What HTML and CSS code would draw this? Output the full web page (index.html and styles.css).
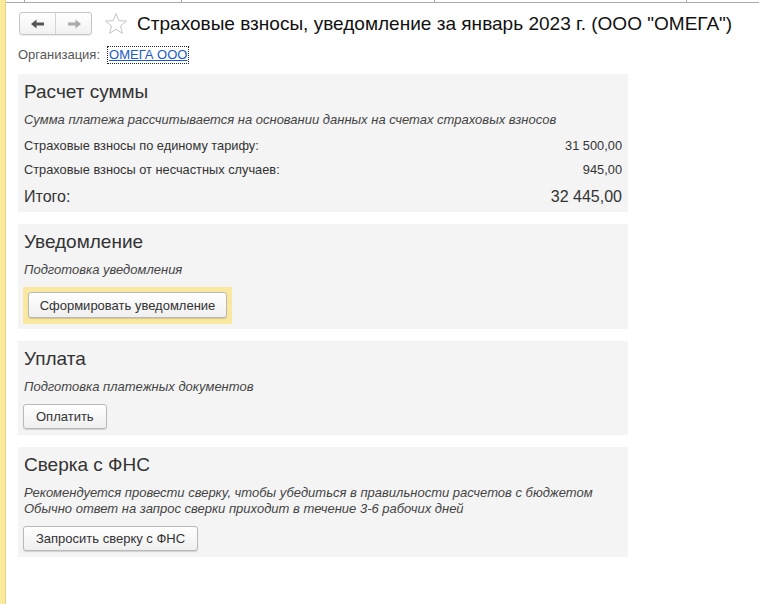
FILE: index.html
```html
<!DOCTYPE html>
<html lang="ru">
<head>
<meta charset="utf-8">
<title>Страховые взносы</title>
<link rel="stylesheet" href="styles.css">
</head>
<body>
<div class="side"></div>
<div class="page">
  <div class="tabs">
    <span class="tab t1"></span><span class="tab t2"></span><span class="tab t3"></span><span class="tab t4"></span><span class="tab t5"></span>
  </div>
  <div class="content">
    <div class="header">
      <div class="nav">
        <span class="navbtn">
          <svg width="16" height="12" viewBox="0 0 16 12"><path d="M1 6 L6.5 1.5 L6.5 4.5 L14 4.5 L14 7.5 L6.5 7.5 L6.5 10.5 Z" fill="#555"/></svg>
        </span>
        <span class="navbtn">
          <svg width="16" height="12" viewBox="0 0 16 12"><path d="M15 6 L9.5 1.5 L9.5 4.5 L2 4.5 L2 7.5 L9.5 7.5 L9.5 10.5 Z" fill="#aaa"/></svg>
        </span>
      </div>
      <svg class="star" width="24" height="24" viewBox="0 0 24 24"><path d="M12 1.5 L14.8 8.6 L22.4 9.1 L16.5 13.9 L18.4 21.3 L12 17.2 L5.6 21.3 L7.5 13.9 L1.6 9.1 L9.2 8.6 Z" fill="none" stroke="#c4c4c4" stroke-width="1"/></svg>
      <h1 class="title">Страховые взносы, уведомление за январь 2023 г. (ООО "ОМЕГА")</h1>
    </div>
    <div class="org"><span class="org-label">Организация:</span><a class="org-link" href="#">ОМЕГА ООО</a></div>

    <section class="card first">
      <h2>Расчет суммы</h2>
      <p class="note">Сумма платежа рассчитывается на основании данных на счетах страховых взносов</p>
      <div class="row"><span>Страховые взносы по единому тарифу:</span><span>31 500,00</span></div>
      <div class="row"><span>Страховые взносы от несчастных случаев:</span><span>945,00</span></div>
      <div class="row total"><span>Итого:</span><span>32 445,00</span></div>
    </section>

    <section class="card">
      <h2>Уведомление</h2>
      <p class="note">Подготовка уведомления</p>
      <div class="hl"><button class="btn wide">Сформировать уведомление</button></div>
    </section>

    <section class="card">
      <h2>Уплата</h2>
      <p class="note">Подготовка платежных документов</p>
      <button class="btn">Оплатить</button>
    </section>

    <section class="card">
      <h2>Сверка с ФНС</h2>
      <p class="note">Рекомендуется провести сверку, чтобы убедиться в правильности расчетов с бюджетом<br>Обычно ответ на запрос сверки приходит в течение 3-6 рабочих дней</p>
      <button class="btn">Запросить сверку с ФНС</button>
    </section>
  </div>
</div>
</body>
</html>
```
FILE: styles.css
```css
html, body {
  margin: 0;
  padding: 0;
  height: 100%;
}
body {
  display: flex;
  font-family: "Liberation Sans", Arial, sans-serif;
  color: #333;
  background: #fff;
}
.side {
  width: 5px;
  flex: none;
  background: #fbe99c;
  border-right: 1px solid #e3d28a;
}
.page {
  flex: 1;
  display: flex;
  flex-direction: column;
  min-width: 0;
}
.tabs {
  display: flex;
  height: 2px;
  border-bottom: 1px solid #a9a9a9;
}
.tab {
  border-right: 1px solid #a9a9a9;
}
.t1 { width: 18px; }
.t2 { width: 156px; }
.t3 { width: 252px; }
.t4 { width: 251px; }
.t5 { flex: 1; border-right: none; }
.content {
  padding: 9px 0 0 12px;
}
.header {
  display: flex;
  align-items: center;
  height: 23px;
}
.nav {
  flex: none;
  display: flex;
  height: 21px;
  margin-left: 1px;
  border: 1px solid #c6c6c6;
  border-radius: 3px;
  background: linear-gradient(#fff, #f1f1f1);
  box-shadow: 0 1px 1px rgba(0,0,0,0.08);
}
.navbtn {
  width: 35px;
  display: flex;
  align-items: center;
  justify-content: center;
}
.navbtn + .navbtn {
  border-left: 1px solid #d4d4d4;
}
.star {
  flex: none;
  margin-left: 12px;
  margin-right: 9px;
}
.title {
  margin: 0;
  font-weight: normal;
  font-size: 19.05px;
  color: #111;
  white-space: nowrap;
  line-height: 23px;
}
.org {
  margin-top: 12px;
  font-size: 13px;
  height: 16px;
  line-height: 16px;
  display: flex;
  align-items: center;
}
.org-label {
  color: #555;
  margin-right: 8px;
}
.org-link {
  color: #2059c8;
  text-decoration: underline;
  outline: 1px dotted #222;
  padding: 0 1px;
}
.card {
  width: 600px;
  background: #f4f4f4;
  margin-top: 12px;
  padding: 6px 5px 6px 5px;
}
.card.first {
  margin-top: 11px;
  padding-bottom: 0;
}
h2 {
  margin: 0 0 0 1px;
  font-weight: normal;
  font-size: 19px;
  color: #333;
  line-height: 24px;
}
.note {
  margin: 8px 0 9px 1px;
  font-style: italic;
  font-size: 13px;
  color: #444;
  line-height: 16px;
}
.first .note {
  margin-bottom: 6px;
}
.row {
  display: flex;
  justify-content: space-between;
  font-size: 12.8px;
  line-height: 16px;
  padding: 4px 1px;
  color: #333;
}
.total {
  font-size: 16px;
  line-height: 20px;
  padding-top: 5px;
  padding-bottom: 5px;
}
.hl {
  display: inline-block;
  background: #fae8a0;
  padding: 5px 5px 6px;
  margin-bottom: -1px;
  vertical-align: top;
}
.btn {
  font-family: "Liberation Sans", Arial, sans-serif;
  font-size: 13px;
  color: #333;
  height: 25px;
  padding: 0 12px;
  border: 1px solid #b9b9b9;
  border-radius: 3px;
  background: linear-gradient(#fff, #efefef);
  box-shadow: 0 1px 1px rgba(0,0,0,0.15);
  display: block;
  white-space: nowrap;
}
.wide {
  width: 199px;
  height: 26px;
  padding: 0;
}
```
